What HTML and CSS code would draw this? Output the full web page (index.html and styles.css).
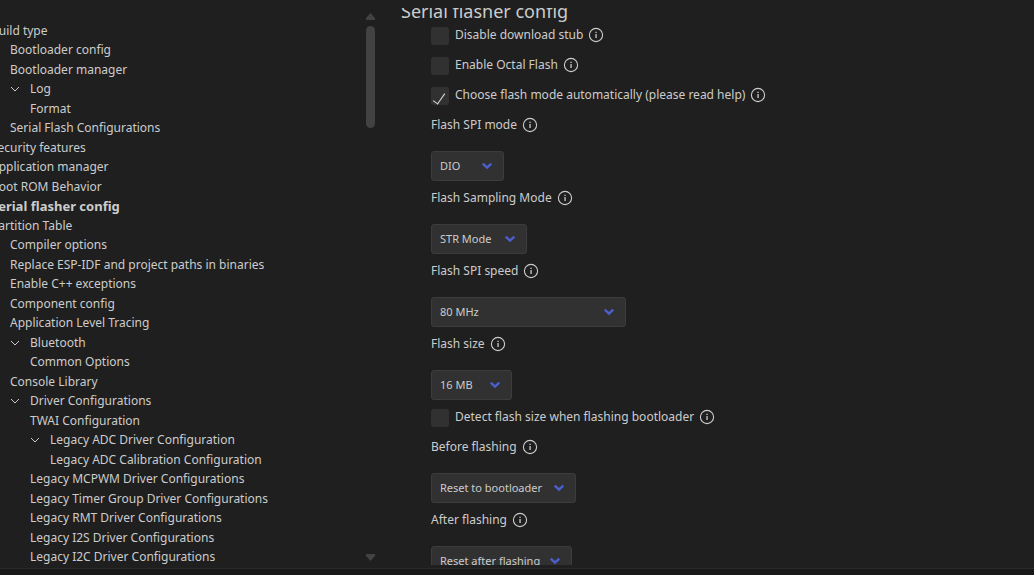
FILE: index.html
```
<!DOCTYPE html>
<html lang="en">
<head>
    <meta charset="UTF-8">
    <meta name="viewport" content="width=device-width, initial-scale=1.0">
    <title>SDK Configuration editor</title>
    <link rel="stylesheet" href="styles.css">
</head>
<body>
    <svg class="sprite" aria-hidden="true">
        <symbol id="chevron" viewBox="0 0 10 10">
            <path d="M1 3l4 4 4-4" fill="none" stroke="currentColor"/>
        </symbol>
        <symbol id="info" viewBox="0 0 16 16">
            <circle cx="8" cy="8" r="6.6" fill="none" stroke="currentColor" stroke-width="1.1"/>
            <path d="M7.4 7h1.3v4H7.4zM7.4 4.8h1.3v1.3H7.4z" fill="currentColor"/>
        </symbol>
        <symbol id="arrow" viewBox="0 0 12 8">
            <path d="M1.7 1.7L6 5.7l4.3-4" fill="none" stroke="currentColor" stroke-width="2.4"/>
        </symbol>
    </svg>

    <div class="editor">
        <nav class="sidebar">
            <ul class="tree">
                <li class="level-0"><a href="#">Build type</a></li>
                <li class="level-1"><a href="#">Bootloader config</a></li>
                <li class="level-1"><a href="#">Bootloader manager</a></li>
                <li class="level-1"><svg class="chevron"><use href="#chevron"/></svg><a href="#">Log</a></li>
                <li class="level-2"><a href="#">Format</a></li>
                <li class="level-1"><a href="#">Serial Flash Configurations</a></li>
                <li class="level-0"><a href="#">Security features</a></li>
                <li class="level-0"><a href="#">Application manager</a></li>
                <li class="level-0"><a href="#">Boot ROM Behavior</a></li>
                <li class="level-0 selected"><a href="#">Serial flasher config</a></li>
                <li class="level-0"><a href="#">Partition Table</a></li>
                <li class="level-1"><a href="#">Compiler options</a></li>
                <li class="level-1"><a href="#">Replace ESP-IDF and project paths in binaries</a></li>
                <li class="level-1"><a href="#">Enable C++ exceptions</a></li>
                <li class="level-1"><a href="#">Component config</a></li>
                <li class="level-1"><a href="#">Application Level Tracing</a></li>
                <li class="level-1"><svg class="chevron"><use href="#chevron"/></svg><a href="#">Bluetooth</a></li>
                <li class="level-2"><a href="#">Common Options</a></li>
                <li class="level-1"><a href="#">Console Library</a></li>
                <li class="level-1"><svg class="chevron"><use href="#chevron"/></svg><a href="#">Driver Configurations</a></li>
                <li class="level-2"><a href="#">TWAI Configuration</a></li>
                <li class="level-2"><svg class="chevron"><use href="#chevron"/></svg><a href="#">Legacy ADC Driver Configuration</a></li>
                <li class="level-3"><a href="#">Legacy ADC Calibration Configuration</a></li>
                <li class="level-2"><a href="#">Legacy MCPWM Driver Configurations</a></li>
                <li class="level-2"><a href="#">Legacy Timer Group Driver Configurations</a></li>
                <li class="level-2"><a href="#">Legacy RMT Driver Configurations</a></li>
                <li class="level-2"><a href="#">Legacy I2S Driver Configurations</a></li>
                <li class="level-2"><a href="#">Legacy I2C Driver Configurations</a></li>
            </ul>
            <div class="scrollbar">
                <svg class="scroll-arrow" viewBox="0 0 9 7"><path d="M4.5 0L9 5v2H0V5z" fill="currentColor"/></svg>
                <div class="scroll-track"><div class="scroll-thumb"></div></div>
                <svg class="scroll-arrow" viewBox="0 0 9 7"><path d="M4.5 7L9 2V0H0v2z" fill="currentColor"/></svg>
            </div>
        </nav>

        <main class="config">
            <h2>Serial flasher config</h2>

            <div class="check-row">
                <input type="checkbox" id="stub">
                <label for="stub">Disable download stub</label>
                <svg class="info"><use href="#info"/></svg>
            </div>
            <div class="check-row">
                <input type="checkbox" id="octal">
                <label for="octal">Enable Octal Flash</label>
                <svg class="info"><use href="#info"/></svg>
            </div>
            <div class="check-row">
                <input type="checkbox" id="automode" checked>
                <label for="automode">Choose flash mode automatically (please read help)</label>
                <svg class="info"><use href="#info"/></svg>
            </div>

            <div class="select-row">
                <div class="caption">
                    <label for="spimode">Flash SPI mode</label>
                    <svg class="info"><use href="#info"/></svg>
                </div>
                <div class="dropdown w-dio">
                    <select id="spimode"><option>DIO</option></select>
                    <svg class="arrow"><use href="#arrow"/></svg>
                </div>
            </div>
            <div class="select-row">
                <div class="caption">
                    <label for="sampling">Flash Sampling Mode</label>
                    <svg class="info"><use href="#info"/></svg>
                </div>
                <div class="dropdown w-str">
                    <select id="sampling"><option>STR Mode</option></select>
                    <svg class="arrow"><use href="#arrow"/></svg>
                </div>
            </div>
            <div class="select-row">
                <div class="caption">
                    <label for="speed">Flash SPI speed</label>
                    <svg class="info"><use href="#info"/></svg>
                </div>
                <div class="dropdown w-speed">
                    <select id="speed"><option>80 MHz</option></select>
                    <svg class="arrow"><use href="#arrow"/></svg>
                </div>
            </div>
            <div class="select-row">
                <div class="caption">
                    <label for="size">Flash size</label>
                    <svg class="info"><use href="#info"/></svg>
                </div>
                <div class="dropdown w-size">
                    <select id="size"><option>16 MB</option></select>
                    <svg class="arrow"><use href="#arrow"/></svg>
                </div>
            </div>

            <div class="check-row">
                <input type="checkbox" id="detect">
                <label for="detect">Detect flash size when flashing bootloader</label>
                <svg class="info"><use href="#info"/></svg>
            </div>

            <div class="select-row">
                <div class="caption">
                    <label for="before">Before flashing</label>
                    <svg class="info"><use href="#info"/></svg>
                </div>
                <div class="dropdown w-before">
                    <select id="before"><option>Reset to bootloader</option></select>
                    <svg class="arrow"><use href="#arrow"/></svg>
                </div>
            </div>
            <div class="select-row">
                <div class="caption">
                    <label for="after">After flashing</label>
                    <svg class="info"><use href="#info"/></svg>
                </div>
                <div class="dropdown w-after">
                    <select id="after"><option>Reset after flashing</option></select>
                    <svg class="arrow"><use href="#arrow"/></svg>
                </div>
            </div>
        </main>
    </div>
    <footer class="panel-edge"></footer>
</body>
</html>
```
FILE: styles.css
```
* {
    box-sizing: border-box;
}
body {
    display: flex;
    flex-direction: column;
    height: 100vh;
    margin: 0;
    padding-top: 8px;
    overflow: hidden;
    background: #1f1f1f;
    color: #cccccc;
    font-family: "Noto Sans", "Open Sans", sans-serif;
    font-size: 12px;
    line-height: 20px;
}
.sprite {
    display: none;
}
svg {
    flex: none;
}
.editor {
    display: flex;
    flex: 1;
    min-height: 0;
    gap: 25px;
}

/* menu tree */
.sidebar {
    display: flex;
    width: 376px;
    flex: none;
    overflow: hidden;
}
.tree {
    display: flex;
    flex-direction: column;
    flex: 1;
    margin: 0 0 -2px;
    padding: 13px 0 0;
    list-style: none;
    white-space: nowrap;
}
.tree li {
    display: flex;
    flex: 1;
    align-items: center;
    min-height: 0;
}
.tree a {
    color: inherit;
    text-decoration: none;
}
.level-0 {
    margin-left: -9px;
}
.level-1 {
    margin-left: 10px;
}
.level-2 {
    margin-left: 30px;
}
.level-3 {
    margin-left: 50px;
}
.selected {
    font-size: 13px;
    font-weight: bold;
}
.chevron {
    width: 10px;
    height: 10px;
    margin-right: 10px;
}
.scrollbar {
    display: flex;
    flex-direction: column;
    gap: 6px;
    width: 10px;
    padding: 5px 0 4px;
    color: #424242;
}
.scroll-arrow {
    width: 9px;
    height: 7px;
}
.scroll-track {
    flex: 1;
}
.scroll-thumb {
    width: 9px;
    height: 102px;
    border-radius: 5px;
    background: #424242;
}

/* settings */
.config {
    flex: 1;
    overflow: hidden;
}
h2 {
    margin: -11px 0 0;
    font-size: 18px;
    font-weight: normal;
    line-height: 28px;
}
.check-row {
    display: flex;
    align-items: flex-start;
    margin: 0 0 10px 30px;
}
.check-row input {
    appearance: none;
    display: grid;
    place-items: end start;
    width: 18px;
    height: 18px;
    margin: 2px 6px 0 0;
    border-radius: 3px;
    background: #313131;
}
.check-row input:checked::before {
    content: "";
    width: 5px;
    height: 12px;
    margin: 0 0 1px 5px;
    border: solid #dddddd;
    border-width: 0 1px 1px 0;
    transform: rotate(35deg);
}
.info {
    width: 16px;
    height: 16px;
    margin: 2px 0 0 5px;
}
.select-row {
    margin: 0 0 7px 30px;
}
.caption {
    display: flex;
    margin-bottom: 16px;
}
.dropdown {
    display: grid;
    align-items: center;
}
.dropdown > * {
    grid-area: 1 / 1;
}
.dropdown select {
    appearance: none;
    width: 100%;
    height: 30px;
    padding: 0 8px;
    border: 1px solid #3c3c3c;
    border-radius: 3px;
    background: #313131;
    color: #cccccc;
    font: inherit;
    font-size: 11px;
}
.arrow {
    justify-self: end;
    width: 12px;
    height: 8px;
    margin-right: 11px;
    color: #4b5fce;
    pointer-events: none;
}
.w-dio {
    width: 73px;
}
.w-str {
    width: 96px;
}
.w-speed {
    width: 195px;
}
.w-size {
    width: 81px;
}
.w-before {
    width: 145px;
}
.w-after {
    width: 141px;
}

.panel-edge {
    height: 7px;
    margin-top: 3px;
    border-top: 1px solid #2b2b2b;
    background: #181818;
}
```
